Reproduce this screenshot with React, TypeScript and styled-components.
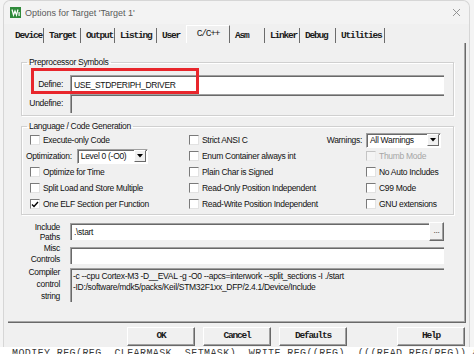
import styled, {createGlobalStyle} from 'styled-components'

const GlobalStyle = createGlobalStyle`
    html, body {
        margin: 0;
        padding: 0;
        background: #f4f4f4;
    }

    * {
        box-sizing: border-box;
    }
`

const Screen = styled.div`
    width: 474px;
    height: 354px;
    overflow: hidden;
    background: #f4f4f4;
    font-family: "Liberation Sans", Arial, sans-serif;
    font-size: 8.5px;
    letter-spacing: -0.3px;
    color: #111;
`

const Window = styled.div`
    margin-left: 3px;
    width: 467px;
    height: 347px;
    background: #f0f0f0;
    border: 1px solid #d6d6d6;
    border-bottom: none;
    border-radius: 7px 7px 0 0;
    display: flex;
    flex-direction: column;
`

const TitleBar = styled.div`
    height: 23px;
    display: flex;
    align-items: center;
    gap: 4px;
    padding: 0 8px 0 6px;
    background: #f3f3f3;
    border-radius: 7px 7px 0 0;
`

const TitleText = styled.span`
    flex: 1;
    font-size: 9px;
    letter-spacing: 0;
    color: #5a5a5a;
`

const TabStrip = styled.div`
    height: 19px;
    display: flex;
    align-items: flex-end;
    padding-left: 6px;
`

const Tab = styled.div<{ $w: number; $sep?: boolean }>`
    width: ${({$w}) => $w}px;
    height: 15px;
    padding-left: 5px;
    font-family: "Liberation Mono", "Courier New", monospace;
    font-weight: bold;
    font-size: 9.5px;
    letter-spacing: -1.2px;
    line-height: 15px;
    color: #1b1b1b;
    white-space: nowrap;
    border-right: 1px solid ${({$sep}) => ($sep === false ? 'transparent' : '#6b6b6b')};
`

const ActiveTab = styled.div`
    width: 44px;
    height: 18px;
    text-align: center;
    font-family: "Liberation Mono", "Courier New", monospace;
    font-size: 9.5px;
    letter-spacing: -1.2px;
    line-height: 15px;
    color: #1b1b1b;
    border-top: 1px solid #fff;
    border-left: 1px solid #fff;
    border-right: 1px solid #6b6b6b;
`

const Panel = styled.div`
    height: 280px;
    margin: 0 3px 0 4px;
    padding: 14px 11px 0 13px;
    border-right: 1px solid #696969;
    border-bottom: 1px solid #696969;
    box-shadow: inset -1px -1px 0 #a8a8a8;
    display: flex;
    flex-direction: column;
`

const Group = styled.fieldset<{ $mt?: number }>`
    margin: ${({$mt}) => $mt ?? 0}px 0 0 0;
    padding: 0;
    min-width: 0;
    border: 1px solid #d0d0d0;
    box-shadow: 1px 1px 0 #fff, inset 1px 1px 0 #fff;
`

const Legend = styled.legend`
    margin-left: 5px;
    padding: 0 2px;
    line-height: 10px;
    color: #111;
`

const SymbolGrid = styled.div`
    position: relative;
    display: grid;
    grid-template-columns: 44px 1fr;
    grid-auto-rows: 19px;
    column-gap: 4px;
    padding: 8px 9px 2px 0;
`

const FieldLabel = styled.div`
    text-align: right;
    padding-right: 3px;
    line-height: 19px;
`

const Field = styled.div<{ $off?: boolean; $h?: number; $mt?: number }>`
    height: ${({$h}) => $h ?? 19}px;
    margin-top: ${({$mt}) => $mt ?? 0}px;
    padding-left: 3px;
    line-height: ${({$h}) => ($h ?? 19) - 1}px;
    background: ${({$off}) => ($off ? '#f0f0f0' : '#fff')};
    border-top: 1px solid #a0a0a0;
    border-left: 1px solid #a0a0a0;
    box-shadow: inset 1px 1px 0 #696969;
    white-space: nowrap;
    overflow: hidden;
`

const Highlight = styled.div`
    position: absolute;
    top: 1px;
    left: 9px;
    width: 168px;
    height: 26px;
    border: 3px solid #e8262c;
    pointer-events: none;
`

const OptionGrid = styled.div`
    display: grid;
    grid-template-columns: 163px 136px 41px 1fr;
    grid-auto-rows: 16px;
    padding: 1px 0 2px 4px;
`

const CheckItem = styled.div<{ $indent?: number; $off?: boolean }>`
    display: flex;
    align-items: center;
    gap: 3px;
    padding-left: ${({$indent}) => $indent ?? 0}px;
    color: ${({$off}) => ($off ? '#a6a6a6' : '#111')};
    white-space: nowrap;
`

const Box = styled.span<{ $off?: boolean }>`
    width: 10px;
    height: 10px;
    flex: none;
    display: flex;
    align-items: center;
    justify-content: center;
    background: ${({$off}) => ($off ? '#f4f4f4' : '#fff')};
    border: 1px solid;
    border-color: ${({$off}) => ($off ? '#c4c4c4 #ececec #ececec #c4c4c4' : '#7a7a7a #e2e2e2 #e2e2e2 #7a7a7a')};
`

const InlineRow = styled.div`
    display: flex;
    align-items: center;
    gap: 5px;
    white-space: nowrap;
`

const SideLabel = styled.div`
    display: flex;
    align-items: center;
    justify-content: flex-end;
    padding-right: 4px;
`

const Select = styled.div<{ $w: number }>`
    width: ${({$w}) => $w}px;
    height: 15px;
    display: flex;
    align-items: center;
    justify-content: space-between;
    padding: 0 1px 0 3px;
    background: #fff;
    border-top: 1px solid #a0a0a0;
    border-left: 1px solid #a0a0a0;
    border-right: 1px solid #fff;
    border-bottom: 1px solid #fff;
    box-shadow: inset 1px 1px 0 #696969;
    white-space: nowrap;
`

const DropButton = styled.span`
    width: 12px;
    height: 12px;
    display: flex;
    align-items: center;
    justify-content: center;
    background: #f0f0f0;
    border: 1px solid;
    border-color: #fff #696969 #696969 #fff;
`

const PathGrid = styled.div`
    margin: 7px 10px 0 0;
    display: grid;
    grid-template-columns: 40px 1fr;
    grid-template-rows: 20px 22px 36px;
    column-gap: 9px;
    row-gap: 1px;
`

const PathLabel = styled.div<{ $lh: number }>`
    text-align: right;
    padding-right: 1px;
    line-height: ${({$lh}) => $lh}px;
`

const FieldRow = styled.div`
    display: flex;
    align-items: flex-start;
`

const DotsButton = styled.div`
    width: 15px;
    height: 19px;
    flex: none;
    text-align: center;
    line-height: 15px;
    background: #f0f0f0;
    border: 1px solid;
    border-color: #fff #696969 #696969 #fff;
    box-shadow: inset -1px -1px 0 #a0a0a0;
    color: #444;
`

const CommandBox = styled.div`
    height: 34px;
    margin-top: 2px;
    padding: 2px 0 0 2px;
    line-height: 11px;
    background: #f0f0f0;
    border-top: 1px solid #a0a0a0;
    border-left: 1px solid #a0a0a0;
    box-shadow: inset 1px 1px 0 #696969;
    white-space: nowrap;
    overflow: hidden;
`

const ButtonRow = styled.div`
    margin-top: 4px;
    display: flex;
    gap: 8px;
    padding: 0 4px 0 123px;
`

const Button = styled.div<{ $push?: boolean }>`
    width: 68px;
    height: 19px;
    margin-left: ${({$push}) => ($push ? 'auto' : '0')};
    text-align: center;
    line-height: 16px;
    font-family: "Liberation Mono", "Courier New", monospace;
    font-weight: bold;
    font-size: 9.5px;
    letter-spacing: -1.2px;
    color: #1b1b1b;
    background: #f0f0f0;
    border: 1px solid;
    border-color: #fff #696969 #696969 #fff;
    box-shadow: inset -1px -1px 0 #a0a0a0;
`

const Behind = styled.div`
    height: 7px;
    overflow: hidden;
    padding-left: 12px;
    background: #fff;
    font-family: "Liberation Mono", "Courier New", monospace;
    font-size: 10px;
    letter-spacing: 0.4px;
    line-height: 13px;
    color: #3a3a3a;
    white-space: pre;
`

function Check({checked, off}: { checked?: boolean; off?: boolean }) {
    return (
        <Box $off={off}>
            {checked && (
                <svg width="8" height="7" viewBox="0 0 8 7">
                    <polyline points="1,3.5 3,5.5 7,1" fill="none" stroke="#000" strokeWidth="1.4"/>
                </svg>
            )}
        </Box>
    )
}

function Option({label, checked, off, indent}: { label: string; checked?: boolean; off?: boolean; indent?: number }) {
    return (
        <CheckItem $indent={indent} $off={off}>
            <Check checked={checked} off={off}/>
            {label}
        </CheckItem>
    )
}

function Dropdown({value, width}: { value: string; width: number }) {
    return (
        <Select $w={width}>
            {value}
            <DropButton>
                <svg width="6" height="4" viewBox="0 0 6 4">
                    <polygon points="0,0 6,0 3,3.5" fill="#000"/>
                </svg>
            </DropButton>
        </Select>
    )
}

const tabs: { label: string; w: number; sep?: boolean }[] = [
    {label: 'Device', w: 34},
    {label: 'Target', w: 37},
    {label: 'Output', w: 34},
    {label: 'Listing', w: 42},
    {label: 'User', w: 29, sep: false},
]

const tabsAfter: { label: string; w: number }[] = [
    {label: 'Asm', w: 35},
    {label: 'Linker', w: 35},
    {label: 'Debug', w: 36},
    {label: 'Utilities', w: 49},
]

export default function App() {
    return (
        <Screen>
            <GlobalStyle/>
            <Window>
                <TitleBar>
                    <svg width="11" height="11" viewBox="0 0 11 11">
                        <rect width="11" height="11" fill="#2f8a3a"/>
                        <path d="M2 2.5 L3.5 8 L5 4 L6.5 8 L8 2.5" fill="none" stroke="#fff" strokeWidth="1.2"/>
                        <rect x="8.5" y="5" width="1.2" height="4" fill="#fff"/>
                    </svg>
                    <TitleText>Options for Target 'Target 1'</TitleText>
                    <svg width="9" height="9" viewBox="0 0 9 9">
                        <path d="M1 1 L8 8 M8 1 L1 8" stroke="#8a8a8a" strokeWidth="0.9"/>
                    </svg>
                </TitleBar>

                <TabStrip>
                    {tabs.map((t) => (
                        <Tab key={t.label} $w={t.w} $sep={t.sep}>{t.label}</Tab>
                    ))}
                    <ActiveTab>C/C++</ActiveTab>
                    {tabsAfter.map((t) => (
                        <Tab key={t.label} $w={t.w}>{t.label}</Tab>
                    ))}
                </TabStrip>

                <Panel>
                    <Group>
                        <Legend>Preprocessor Symbols</Legend>
                        <SymbolGrid>
                            <FieldLabel>Define:</FieldLabel>
                            <Field>USE_STDPERIPH_DRIVER</Field>
                            <FieldLabel>Undefine:</FieldLabel>
                            <Field $off/>
                            <Highlight/>
                        </SymbolGrid>
                    </Group>

                    <Group $mt={5}>
                        <Legend>Language / Code Generation</Legend>
                        <OptionGrid>
                            <Option label="Execute-only Code" indent={4}/>
                            <Option label="Strict ANSI C"/>
                            <SideLabel>Warnings:</SideLabel>
                            <InlineRow><Dropdown value="All Warnings" width={75}/></InlineRow>

                            <InlineRow>Optimization: <Dropdown value="Level 0 (-O0)" width={71}/></InlineRow>
                            <Option label="Enum Container always int"/>
                            <span/>
                            <Option label="Thumb Mode" off/>

                            <Option label="Optimize for Time" indent={4}/>
                            <Option label="Plain Char is Signed"/>
                            <span/>
                            <Option label="No Auto Includes"/>

                            <Option label="Split Load and Store Multiple" indent={4}/>
                            <Option label="Read-Only Position Independent"/>
                            <span/>
                            <Option label="C99 Mode"/>

                            <Option label="One ELF Section per Function" indent={4} checked/>
                            <Option label="Read-Write Position Independent"/>
                            <span/>
                            <Option label="GNU extensions"/>
                        </OptionGrid>
                    </Group>

                    <PathGrid>
                        <PathLabel $lh={10}>Include<br/>Paths</PathLabel>
                        <FieldRow>
                            <Field $h={17} $mt={1} style={{flex: 1}}>.\start</Field>
                            <DotsButton>...</DotsButton>
                        </FieldRow>

                        <PathLabel $lh={11}>Misc<br/>Controls</PathLabel>
                        <Field $h={17} $mt={4}/>

                        <PathLabel $lh={12}>Compiler<br/>control<br/>string</PathLabel>
                        <CommandBox>
                            -c --cpu Cortex-M3 -D__EVAL -g -O0 --apcs=interwork --split_sections -I ./start<br/>
                            -ID:/software/mdk5/packs/Keil/STM32F1xx_DFP/2.4.1/Device/Include
                        </CommandBox>
                    </PathGrid>
                </Panel>

                <ButtonRow>
                    <Button>OK</Button>
                    <Button>Cancel</Button>
                    <Button>Defaults</Button>
                    <Button $push>Help</Button>
                </ButtonRow>
            </Window>
            <Behind>{'MODIFY_REG(REG, CLEARMASK, SETMASK)  WRITE_REG((REG), (((READ_REG(REG)) & (~(CLEARMASK))) | (SETMASK)))'}</Behind>
        </Screen>
    )
}
